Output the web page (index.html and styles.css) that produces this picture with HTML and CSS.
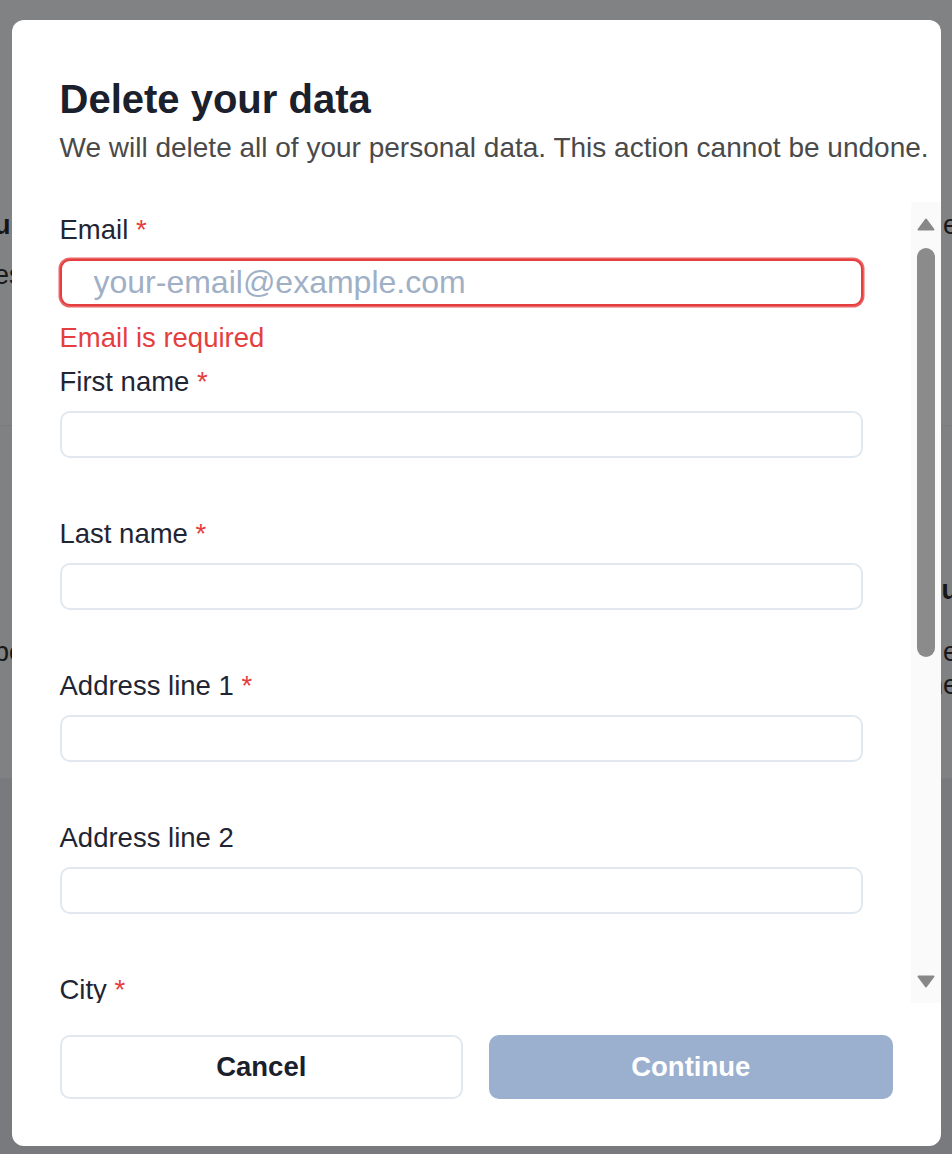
FILE: index.html
```html
<!DOCTYPE html>
<html lang="en">
<head>
<meta charset="utf-8">
<title>Delete your data</title>
<link rel="stylesheet" href="styles.css">
</head>
<body>
<div class="page">
  <section class="bg-top">
    <div class="bg-row bg-row-1">
      <span class="bg-word bg-bold bg-left">u</span>
      <span class="bg-word bg-right">e</span>
    </div>
    <div class="bg-row bg-row-2">
      <span class="bg-word bg-left">es</span>
      <span class="bg-word bg-right">i</span>
    </div>
  </section>
  <section class="bg-mid">
    <div class="bg-row bg-row-3">
      <span class="bg-word"></span>
      <span class="bg-word bg-bold bg-right">ou</span>
    </div>
    <div class="bg-row bg-row-4">
      <span class="bg-word bg-left">pe</span>
      <span class="bg-word bg-right">e</span>
    </div>
    <div class="bg-row">
      <span class="bg-word"></span>
      <span class="bg-word bg-right">he</span>
    </div>
  </section>
  <section class="bg-foot"></section>
</div>

<div class="overlay">
  <div class="modal" role="dialog" aria-labelledby="dlg-title">
    <header class="modal-head">
      <h1 id="dlg-title" class="title">Delete your data</h1>
      <p class="subtitle">We will delete all of your personal data. This action cannot be undone.</p>
    </header>

    <div class="scroll-wrap">
      <form class="scroll">
        <div class="field">
          <label class="label">Email <span class="req">*</span></label>
          <input class="input input-error" type="email" placeholder="your-email@example.com">
          <p class="error">Email is required</p>
        </div>
        <div class="field">
          <label class="label">First name <span class="req">*</span></label>
          <input class="input" type="text">
          <p class="error"></p>
        </div>
        <div class="field">
          <label class="label">Last name <span class="req">*</span></label>
          <input class="input" type="text">
          <p class="error"></p>
        </div>
        <div class="field">
          <label class="label">Address line 1 <span class="req">*</span></label>
          <input class="input" type="text">
          <p class="error"></p>
        </div>
        <div class="field">
          <label class="label">Address line 2</label>
          <input class="input" type="text">
          <p class="error"></p>
        </div>
        <div class="field">
          <label class="label">City <span class="req">*</span></label>
          <input class="input" type="text">
        </div>
      </form>

      <div class="scrollbar" aria-hidden="true">
        <div class="sb-btn">
          <svg width="18" height="13" viewBox="0 0 18 13"><path d="M9 1.5 L16.5 11.5 H1.5 Z" fill="#888" stroke="#888" stroke-width="2" stroke-linejoin="round"/></svg>
        </div>
        <div class="sb-track">
          <div class="sb-thumb"></div>
        </div>
        <div class="sb-btn">
          <svg width="18" height="13" viewBox="0 0 18 13"><path d="M1.5 1.5 H16.5 L9 11.5 Z" fill="#888" stroke="#888" stroke-width="2" stroke-linejoin="round"/></svg>
        </div>
      </div>
    </div>

    <footer class="actions">
      <button class="btn btn-cancel" type="button">Cancel</button>
      <button class="btn btn-continue" type="button">Continue</button>
    </footer>
  </div>
</div>
</body>
</html>
```

FILE: styles.css
```css
html, body {
  margin: 0;
  padding: 0;
}

body {
  font-family: "Liberation Sans", Arial, sans-serif;
  background: #ffffff;
  color: #1a202c;
}

/* background page (under the overlay) */
.page {
  width: 952px;
  overflow: hidden;
}

.bg-top {
  height: 425px;
  box-sizing: border-box;
  padding-top: 207px;
  background: #ffffff;
}

.bg-mid {
  height: 353px;
  box-sizing: border-box;
  padding-top: 146px;
  background: #fdfdfd;
  border-top: 1px solid #f0f0f0;
}

.bg-foot {
  height: 400px;
  background: #eceef1;
}

.bg-row {
  display: flex;
  justify-content: space-between;
  height: 36px;
  margin-bottom: 14px;
}

.bg-row-2 {
  margin-bottom: 0;
}

.bg-row-3 {
  margin-bottom: 26px;
}

.bg-row-4 {
  margin-bottom: -3px;
}

.bg-word {
  font-size: 27px;
  line-height: 36px;
  color: #2b2b2b;
  white-space: nowrap;
}

.bg-bold {
  font-weight: 700;
  color: #2a2620;
}

.bg-left {
  margin-left: -6px;
}

.bg-right {
  margin-right: -6px;
}

/* overlay + modal */
.overlay {
  position: fixed;
  inset: 0;
  background: rgba(4, 6, 10, 0.5);
  display: flex;
  justify-content: center;
  align-items: flex-start;
  padding-top: 20px;
}

.modal {
  width: 929px;
  box-sizing: border-box;
  padding: 55px 48px 47px;
  background: #ffffff;
  border-radius: 12px;
  display: flex;
  flex-direction: column;
}

.title {
  margin: 0;
  font-size: 40px;
  line-height: 48px;
  font-weight: 700;
  color: #1a202c;
}

.subtitle {
  margin: 7px 0 0;
  font-size: 28px;
  line-height: 36px;
  color: #4a4a4a;
  white-space: nowrap;
}

/* scrolling form area */
.scroll-wrap {
  display: flex;
  height: 801px;
  margin: 36px -48px 0;
}

.scroll {
  flex: 1;
  min-width: 0;
  overflow: hidden;
  padding: 12px 48px 0;
  background: #ffffff;
}

.scrollbar {
  width: 30px;
  flex: none;
  display: flex;
  flex-direction: column;
  background: #fafafa;
}

.sb-btn {
  height: 44px;
  display: flex;
  align-items: center;
  justify-content: center;
}

.sb-track {
  flex: 1;
  padding: 2px 6px;
}

.sb-thumb {
  height: 409px;
  border-radius: 9px;
  background: #8b8b8b;
}

.field {
  margin-bottom: 10px;
}

.label {
  display: block;
  font-size: 27.5px;
  line-height: 32px;
  margin-bottom: 13px;
  color: #1f2533;
}

.req {
  color: #e53e3e;
}

.input {
  display: block;
  width: 100%;
  height: 47px;
  box-sizing: border-box;
  margin: 0;
  padding: 0 16px 0 32px;
  border: 2px solid #e2e8f0;
  border-radius: 10px;
  background: #ffffff;
  font-family: "Liberation Sans", Arial, sans-serif;
  font-size: 32px;
  color: #1a202c;
  outline: none;
}

.input::placeholder {
  color: #9fb0c6;
}

.input-error {
  border-color: #e53e3e;
  box-shadow: 0 0 0 1.5px rgba(229, 62, 62, 0.8);
}

.error {
  margin: 14px 0 0;
  height: 36px;
  font-size: 27.5px;
  line-height: 36px;
  color: #e53e3e;
}

/* footer buttons */
.actions {
  margin-top: 32px;
  display: grid;
  grid-template-columns: 1fr 1fr;
  gap: 26px;
}

.btn {
  height: 64px;
  border-radius: 10px;
  font-family: "Liberation Sans", Arial, sans-serif;
  font-size: 27.5px;
  font-weight: 700;
  cursor: pointer;
}

.btn-cancel {
  background: #ffffff;
  border: 2px solid #e2e8f0;
  color: #1a202c;
}

.btn-continue {
  background: #9bb0cf;
  border: none;
  color: #ffffff;
}
```
